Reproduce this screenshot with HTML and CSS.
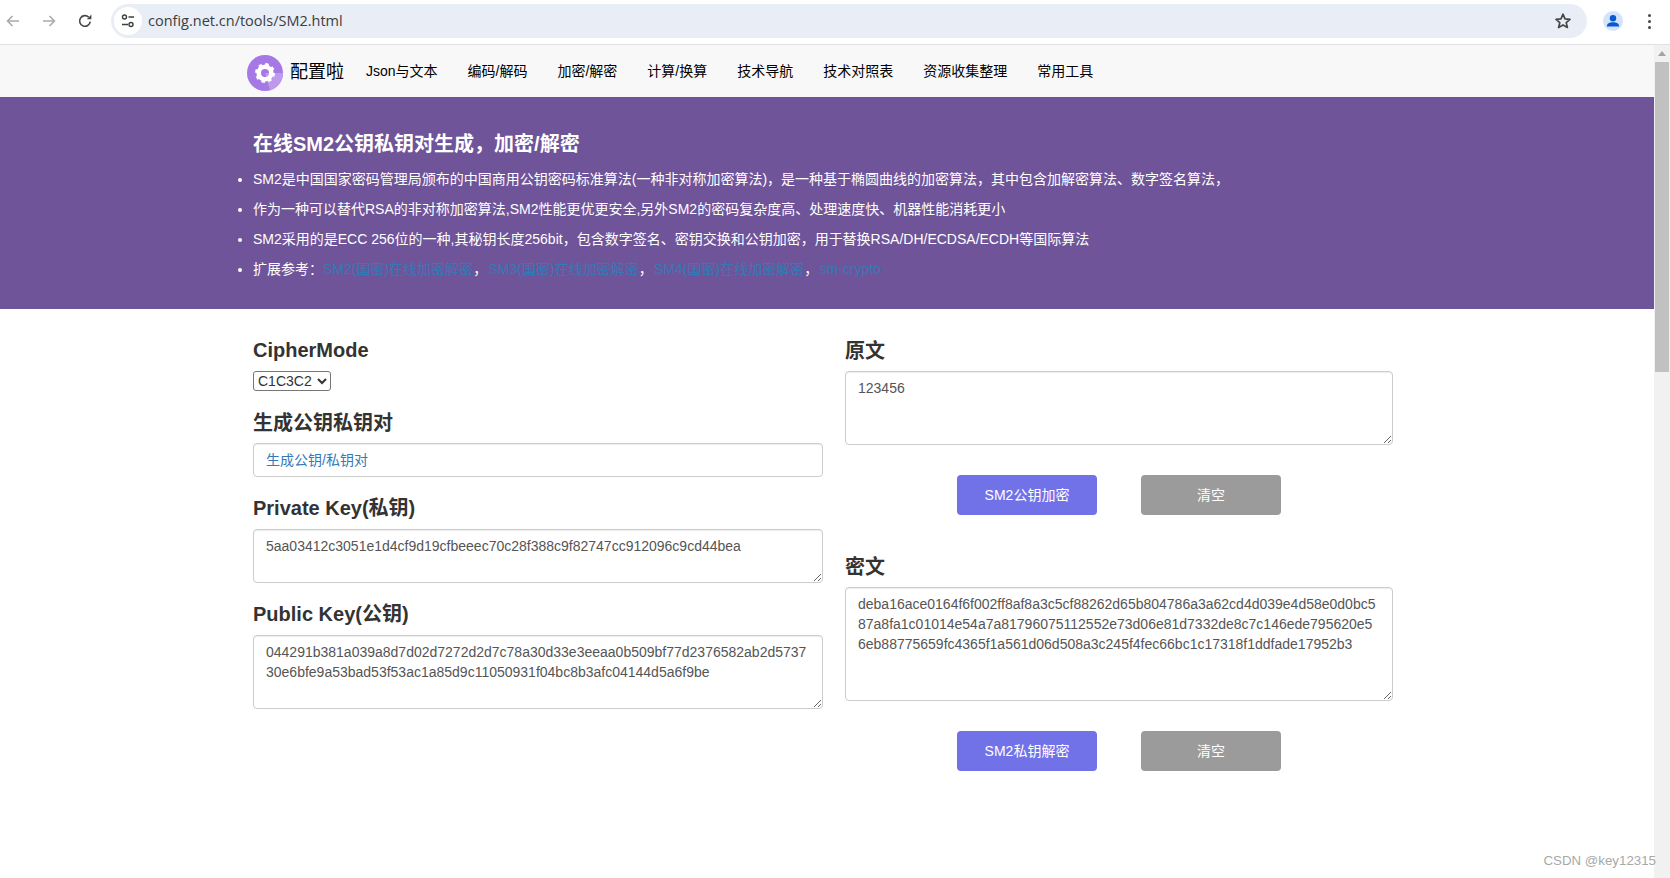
FILE: index.html
```html
<!DOCTYPE html>
<html lang="zh-CN">
<head>
<meta charset="utf-8">
<title>SM2</title>
<link rel="stylesheet" href="styles.css">
</head>
<body>
<header class="chrome">
  <svg class="cicon" viewBox="0 0 16 16"><path d="M14 8H3M7.5 3 2.5 8l5 5" fill="none" stroke="#a9abae" stroke-width="1.6"/></svg>
  <svg class="cicon" viewBox="0 0 16 16"><path d="M2 8h11M8.5 3l5 5-5 5" fill="none" stroke="#a9abae" stroke-width="1.6"/></svg>
  <svg class="cicon" viewBox="0 0 16 16"><path d="M13.2 8.6A5.3 5.3 0 1 1 11.7 4.2" fill="none" stroke="#474747" stroke-width="1.6"/><path d="M9.8 6.2h4.6V1.6z" fill="#474747"/></svg>
  <div class="omnibox">
    <span class="tune"><svg viewBox="0 0 16 16" width="16" height="16"><circle cx="4.5" cy="4" r="2" fill="none" stroke="#3c4043" stroke-width="1.4"/><path d="M8.5 4H14M2 11.5h6" stroke="#3c4043" stroke-width="1.6"/><circle cx="11" cy="11.5" r="2" fill="none" stroke="#3c4043" stroke-width="1.4"/></svg></span>
    <span class="url">config.net.cn/tools/SM2.html</span>
    <svg class="star" viewBox="0 0 18 18"><path d="M9 2.2l2 4.6 5 .5-3.8 3.3 1.2 4.9L9 12.9l-4.4 2.6 1.2-4.9L2 7.3l5-.5z" fill="none" stroke="#474747" stroke-width="1.7" stroke-linejoin="round"/></svg>
  </div>
  <span class="avatar"><svg viewBox="0 0 20 20" width="20" height="20"><circle cx="10" cy="7.2" r="3.2" fill="#0b57d0"/><path d="M3.8 15.5c0-3 2.8-4.2 6.2-4.2s6.2 1.2 6.2 4.2z" fill="#0b57d0"/></svg></span>
  <span class="menu"><i></i><i></i><i></i></span>
</header>

<div class="viewport">
  <main class="page">
    <nav class="nav">
      <div class="wrap nav-row">
        <a class="brand">
          <svg class="logo" viewBox="0 0 36 36">
            <circle cx="18" cy="18" r="18" fill="#a578e6"/>
            <path d="M18 18L36 18A18 18 0 0 1 23 35.3z" fill="#bd9aec"/>
            <circle cx="18" cy="18" r="6.3" fill="none" stroke="#fff" stroke-width="4.6"/>
            <circle cx="18" cy="18" r="8.8" fill="none" stroke="#fff" stroke-width="2.4" stroke-dasharray="3.5 3.41"/>
          </svg>
          <span class="brand-name">配置啦</span>
        </a>
        <a class="nav-link">Json与文本</a>
        <a class="nav-link">编码/解码</a>
        <a class="nav-link">加密/解密</a>
        <a class="nav-link">计算/换算</a>
        <a class="nav-link">技术导航</a>
        <a class="nav-link">技术对照表</a>
        <a class="nav-link">资源收集整理</a>
        <a class="nav-link">常用工具</a>
      </div>
    </nav>

    <section class="banner">
      <div class="wrap banner-inner">
        <h1 class="banner-title">在线SM2公钥私钥对生成，加密/解密</h1>
        <ul class="banner-list">
          <li>SM2是中国国家密码管理局颁布的中国商用公钥密码标准算法(一种非对称加密算法)，是一种基于椭圆曲线的加密算法，其中包含加解密算法、数字签名算法，</li>
          <li>作为一种可以替代RSA的非对称加密算法,SM2性能更优更安全,另外SM2的密码复杂度高、处理速度快、机器性能消耗更小</li>
          <li>SM2采用的是ECC 256位的一种,其秘钥长度256bit，包含数字签名、密钥交换和公钥加密，用于替换RSA/DH/ECDSA/ECDH等国际算法</li>
          <li class="ref-line">扩展参考：<a class="ref">SM2(国密)在线加密解密</a>， <a class="ref">SM3(国密)在线加密解密</a>， <a class="ref">SM4(国密)在线加密解密</a>， <a class="ref">sm-crypto</a></li>
        </ul>
      </div>
    </section>

    <section class="wrap tool">
      <div class="col">
        <h2 class="label">CipherMode</h2>
        <select class="mode"><option>C1C3C2</option><option>C1C2C3</option></select>
        <h2 class="label after cjk">生成公钥私钥对</h2>
        <div class="control link-box"><a class="gen">生成公钥/私钥对</a></div>
        <h2 class="label after">Private Key(私钥)</h2>
        <textarea class="control ta-key" spellcheck="false">5aa03412c3051e1d4cf9d19cfbeeec70c28f388c9f82747cc912096c9cd44bea</textarea>
        <h2 class="label after">Public Key(公钥)</h2>
        <textarea class="control ta-mid" spellcheck="false">044291b381a039a8d7d02d7272d2d7c78a30d33e3eeaa0b509bf77d2376582ab2d573730e6bfe9a53bad53f53ac1a85d9c11050931f04bc8b3afc04144d5a6f9be</textarea>
      </div>
      <div class="col">
        <h2 class="label cjk">原文</h2>
        <textarea class="control ta-mid" spellcheck="false">123456</textarea>
        <div class="btn-row">
          <button class="btn primary">SM2公钥加密</button>
          <button class="btn muted">清空</button>
        </div>
        <h2 class="label after-btn cjk">密文</h2>
        <textarea class="control ta-big" spellcheck="false">deba16ace0164f6f002ff8af8a3c5cf88262d65b804786a3a62cd4d039e4d58e0d0bc587a8fa1c01014e54a7a81796075112552e73d06e81d7332de8c7c146ede795620e56eb88775659fc4365f1a561d06d508a3c245f4fec66bc1c17318f1ddfade17952b3</textarea>
        <div class="btn-row">
          <button class="btn primary">SM2私钥解密</button>
          <button class="btn muted">清空</button>
        </div>
      </div>
    </section>
  </main>
  <aside class="scrollbar">
    <span class="arrow"></span>
    <span class="thumb"></span>
  </aside>
  <span class="watermark">CSDN @key12315</span>
</div>
</body>
</html>
```

FILE: styles.css
```css
* { box-sizing: border-box; }
html, body { margin: 0; height: 100%; overflow: hidden; }
body {
  width: 1670px;
  height: 878px;
  background: #fff;
  color: #333;
  font-family: "Liberation Sans", "Noto Sans CJK SC", sans-serif;
  font-size: 14px;
  line-height: 20px;
  display: flex;
  flex-direction: column;
}

/* browser chrome */
.chrome {
  height: 45px;
  flex: none;
  display: flex;
  align-items: center;
  background: #fff;
  border-bottom: 1px solid #dfe1e5;
  padding: 0 0 2px 5px;
}
.cicon { width: 16px; height: 16px; margin-right: 20px; flex: none; }
.omnibox {
  width: 1476px;
  height: 34px;
  margin-left: -2px;
  border-radius: 17px;
  background: #e9edf6;
  display: flex;
  align-items: center;
  padding: 0 15px 0 3px;
  color: #1f1f1f;
}
.tune {
  width: 28px;
  height: 28px;
  border-radius: 50%;
  background: #fff;
  display: flex;
  align-items: center;
  justify-content: center;
  flex: none;
}
.url {
  margin-left: 6px;
  font-family: "Open Sans", "Liberation Sans", sans-serif;
  font-size: 14.5px;
  color: #3a3d42;
  flex: 1;
}
.star { width: 18px; height: 18px; flex: none; }
.avatar {
  width: 20px;
  height: 20px;
  margin-left: 16px;
  border-radius: 50%;
  background: #d3e3fd;
  flex: none;
}
.menu {
  margin-left: 25px;
  display: flex;
  flex-direction: column;
  gap: 3px;
  width: 4px;
}
.menu i { width: 3px; height: 3px; border-radius: 50%; background: #474747; display: block; }

/* page */
.viewport { flex: 1; display: flex; position: relative; min-height: 0; }
.page { width: 1654px; flex: none; }
.wrap { width: 1170px; margin: 0 auto; }

.nav { height: 52px; background: #f8f8f8; }
.nav-row { display: flex; align-items: center; height: 52px; padding-left: 5px; }
.brand { display: flex; align-items: center; margin-right: 1px; }
.logo { width: 36px; height: 36px; flex: none; margin-top: 3px; }
.brand-name { font-size: 18px; color: #000; margin-left: 7px; margin-right: 6px; padding-top: 2px; }
.nav-link { color: #000; padding: 0 15px; }

.banner { background: #6f5499; color: #fff; height: 212px; }
.banner-inner { padding: 35px 0 0 11px; }
.banner-title { margin: 0 0 9px; padding-top: 1px; font-size: 20px; line-height: 22px; font-weight: 700; }
.banner-list { margin: 0; padding: 0; line-height: 30px; }
.ref-line { word-spacing: -2.5px; }
.ref { color: #337ab7; word-spacing: 0; }

.tool {
  display: grid;
  grid-template-columns: 570px 548px;
  column-gap: 22px;
  padding: 30px 0 0 11px;
}
.col { display: flex; flex-direction: column; align-items: flex-start; }
.label { margin: 0 0 10px; font-size: 20px; line-height: 22px; font-weight: 700; color: #333; }
.label.cjk { padding-top: 1px; margin-bottom: 9px; }
.label.after { margin-top: 20px; }
.label.after-btn { margin-top: 40px; }

.mode {
  width: 78px;
  height: 20px;
  font-family: inherit;
  font-size: 14px;
  color: #333;
  background: #fff;
  border: 1px solid #767676;
  border-radius: 3px;
  padding: 0;
}
.control {
  display: block;
  width: 100%;
  margin: 0;
  border: 1px solid #ccc;
  border-radius: 4px;
  box-shadow: inset 0 1px 1px rgba(0, 0, 0, .075);
  background: #fff;
  padding: 6px 12px;
  font-family: inherit;
  font-size: 14px;
  line-height: 20px;
  color: #555;
}
.link-box { height: 34px; }
.gen { color: #337ab7; }
.ta-key { height: 54px; }
.ta-mid { height: 74px; }
.ta-big { height: 114px; }

.btn-row { display: flex; justify-content: center; gap: 44px; width: 100%; margin-top: 30px; }
.btn {
  width: 140px;
  height: 40px;
  border: 0;
  border-radius: 4px;
  color: #fff;
  font-family: inherit;
  font-size: 14px;
  padding: 0 0 2px;
}
.primary { background: #7272e8; }
.muted { background: #9b9b9b; }

.scrollbar {
  width: 16px;
  flex: none;
  background: #f1f1f1;
  display: flex;
  flex-direction: column;
  align-items: center;
}
.arrow {
  margin-top: 6px;
  width: 0;
  height: 0;
  border: 4px solid transparent;
  border-top: 0;
  border-bottom: 5px solid #a3a3a3;
}
.thumb { width: 14px; height: 310px; margin-top: 6px; background: #c1c1c1; }

.watermark {
  position: absolute;
  right: 14px;
  top: 806px;
  color: #a8a8a8;
  font-size: 13.3px;
  line-height: 20px;
  white-space: nowrap;
}
```
